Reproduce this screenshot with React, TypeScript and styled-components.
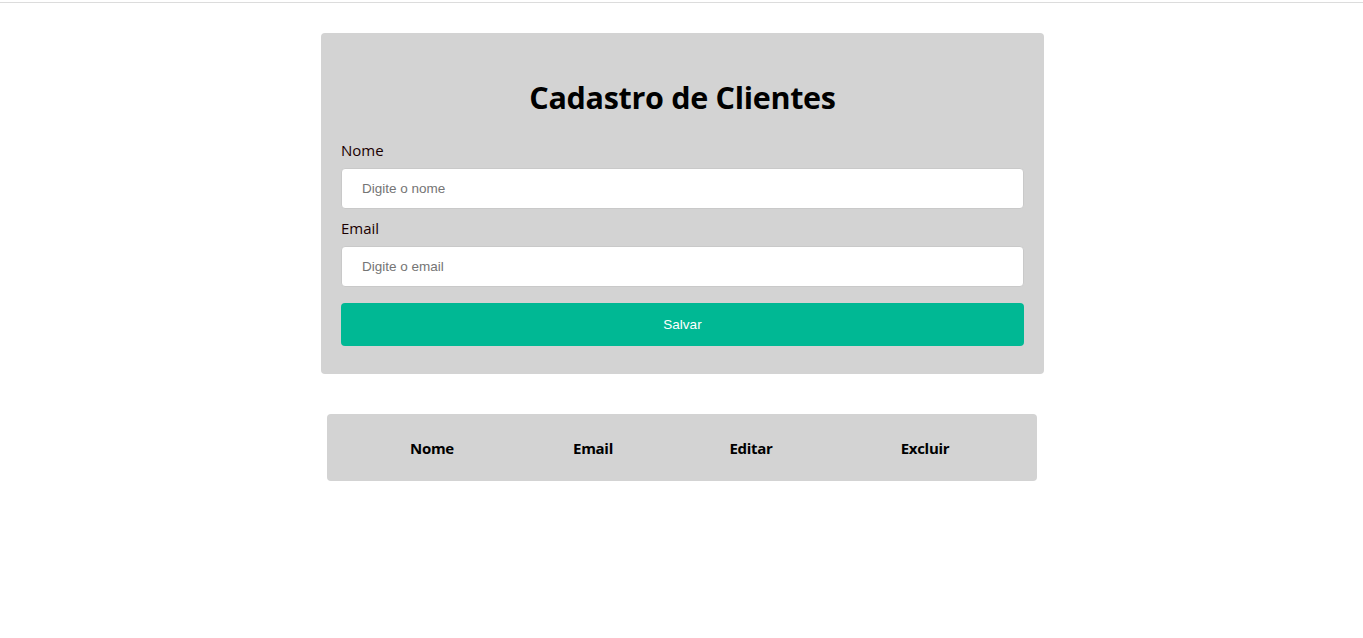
import React from "react";
import styled, { createGlobalStyle } from "styled-components";

const Global = createGlobalStyle`
  * { box-sizing: border-box; }
  html, body { margin: 0; padding: 0; background: #fff; }
  body { font-family: "Open Sans", "Noto Sans", sans-serif; color: #000; }
`;

const TopBar = styled.div`
  height: 3px;
  border-bottom: 1px solid #dcdcdc;
`;

const Page = styled.main`
  display: flex;
  flex-direction: column;
  align-items: center;
  padding-top: 30px;
`;

const Card = styled.form`
  width: 723px;
  margin-left: 2px;
  background: #d3d3d3;
  border-radius: 4px;
  padding: 36px 20px 28px;
  display: flex;
  flex-direction: column;
`;

const Title = styled.h1`
  margin: 0 0 15px;
  text-align: center;
  font-size: 30.5px;
  font-weight: 700;
  line-height: 56px;
  letter-spacing: -0.3px;
`;

const Label = styled.label`
  font-size: 15px;
  line-height: 20px;
  margin-bottom: 8px;
  color: #1a0000;
`;

const Input = styled.input<{ $mb?: number }>`
  height: 41px;
  width: 100%;
  border: 1px solid #c9c9c9;
  border-radius: 4px;
  background: #fff;
  padding: 0 20px;
  font-family: "Liberation Sans", Arial, sans-serif;
  font-size: 13.5px;
  margin-bottom: ${(p) => p.$mb ?? 0}px;
  &::placeholder { color: #757575; }
  outline: none;
`;

const Button = styled.button`
  height: 43px;
  width: 100%;
  border: none;
  border-radius: 4px;
  background: #00b894;
  color: #fff;
  font-family: "Liberation Sans", Arial, sans-serif;
  font-size: 13.5px;
  cursor: pointer;
`;

const Table = styled.div`
  width: 710px;
  margin-top: 40px;
  margin-left: 1px;
  background: #d3d3d3;
  border-radius: 4px;
  padding: 0 20px;
  height: 67px;
  display: grid;
  grid-template-columns: 170px 152px 164px 184px;
  align-items: center;
`;

const Th = styled.div`
  text-align: center;
  font-weight: 700;
  font-size: 15px;
  letter-spacing: -0.3px;
`;

export default function App() {
  return (
    <>
      <Global />
      <TopBar />
      <Page>
        <Card onSubmit={(e) => e.preventDefault()}>
          <Title>Cadastro de Clientes</Title>
          <Label>Nome</Label>
          <Input placeholder="Digite o nome" $mb={9} />
          <Label>Email</Label>
          <Input placeholder="Digite o email" $mb={16} />
          <Button type="submit">Salvar</Button>
        </Card>
        <Table>
          <Th>Nome</Th>
          <Th>Email</Th>
          <Th>Editar</Th>
          <Th>Excluir</Th>
        </Table>
      </Page>
    </>
  );
}
